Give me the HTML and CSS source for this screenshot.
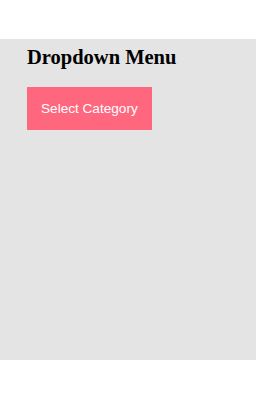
FILE: index.html
```html
<!DOCTYPE html>
<html lang="en">
<head>
    <meta charset="UTF-8">
    <meta name="viewport" content="width=device-width, initial-scale=1.0">
    <title>Dropdown Menu</title>
    <link rel="stylesheet" href="styles.css">
</head>
<body>
    <div class="page">
        <h2 class="title">Dropdown Menu</h2>
        <div class="dropdown">
            <button class="dropdown-toggle">Select Category</button>
        </div>
    </div>
</body>
</html>
```

FILE: styles.css
```css
body {
    margin: 0;
    background-color: #fff;
    font-family: 'Liberation Serif', 'Times New Roman', serif;
}

.page {
    margin-top: 39px;
    height: 321px;
    box-sizing: border-box;
    padding: 7px 27px 0;
    background-color: #e4e4e4;
}

.title {
    margin: 0;
    font-size: 20.5px;
    line-height: 23px;
    color: #000;
}

.dropdown {
    display: flex;
    margin-top: 18px;
}

.dropdown-toggle {
    padding: 13px 14px;
    font-family: 'Liberation Sans', Arial, sans-serif;
    font-size: 13.6px;
    line-height: 17px;
    color: #fff;
    background-color: #ff677f;
    border: none;
    cursor: pointer;
}
```
